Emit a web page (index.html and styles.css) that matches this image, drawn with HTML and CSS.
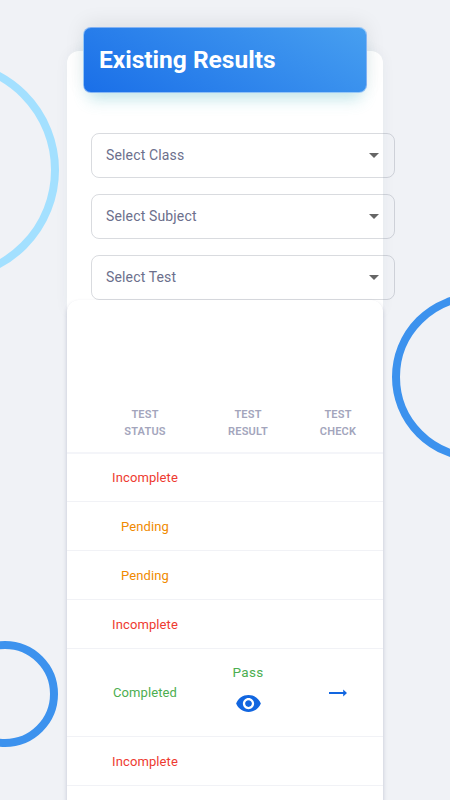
FILE: index.html
```html
<!DOCTYPE html>
<html lang="en">
<head>
<meta charset="utf-8">
<title>Existing Results</title>
<link rel="stylesheet" href="styles.css">
</head>
<body>
<div class="ring ring-left"></div>
<div class="ring ring-right"></div>
<div class="ring ring-bottom"></div>
<main class="page">
  <div class="card">
    <section class="filters">
      <h1 class="title">Existing Results</h1>
      <div class="selects">
        <div class="select"><span>Select Class</span><i class="caret"></i></div>
        <div class="select"><span>Select Subject</span><i class="caret"></i></div>
        <div class="select"><span>Select Test</span><i class="caret"></i></div>
      </div>
    </section>
    <section class="table">
      <div class="row head">
        <div class="c1">TEST<br>STATUS</div>
        <div class="c2">TEST<br>RESULT</div>
        <div class="c3">TEST<br>CHECK</div>
      </div>
      <div class="row"><div class="c1 red">Incomplete</div><div class="c2"></div><div class="c3"></div></div>
      <div class="row"><div class="c1 orange">Pending</div><div class="c2"></div><div class="c3"></div></div>
      <div class="row"><div class="c1 orange">Pending</div><div class="c2"></div><div class="c3"></div></div>
      <div class="row"><div class="c1 red">Incomplete</div><div class="c2"></div><div class="c3"></div></div>
      <div class="row tall">
        <div class="c1 green">Completed</div>
        <div class="c2 result">
          <span class="green pass">Pass</span>
          <svg class="eye" viewBox="0 0 24 24" width="27" height="27"><path d="M12 4.5C7 4.5 2.73 7.61 1 12c1.73 4.39 6 7.5 11 7.5s9.27-3.11 11-7.5c-1.73-4.39-6-7.5-11-7.5zM12 17c-2.76 0-5-2.24-5-5s2.24-5 5-5 5 2.24 5 5-2.24 5-5 5zm0-8c-1.66 0-3 1.34-3 3s1.34 3 3 3 3-1.34 3-3-1.34-3-3-3z"/></svg>
        </div>
        <div class="c3"><svg class="arrow" viewBox="0 0 18 8" width="18" height="8"><path d="M0 3.1h14.2V.4L18 4l-3.8 3.6V4.9H0z"/></svg></div>
      </div>
      <div class="row"><div class="c1 red">Incomplete</div><div class="c2"></div><div class="c3"></div></div>
    </section>
  </div>
</main>
</body>
</html>
```
FILE: styles.css
```css
* { box-sizing: border-box; }
html, body { margin: 0; height: 800px; overflow: hidden; }
body { background: #f0f2f6; font-family: Roboto, sans-serif; position: relative; }
.ring { position: absolute; border-radius: 50%; }
.ring-left { left: -163px; top: 59px; width: 222px; height: 222px; border: 8px solid #a3e0ff; }
.ring-right { left: 392px; top: 293px; width: 168px; height: 168px; border: 8px solid #3c92ee; }
.ring-bottom { left: -48px; top: 641px; width: 106px; height: 106px; border: 8px solid #3c92ee; }
.page { position: relative; padding: 51px 67px 0; }
.card { width: 316px; }
.filters { height: 260px; padding-left: 16px; position: relative; background: #fff; border-radius: 12px 12px 0 0; box-shadow: 0 0 14px rgba(40, 50, 80, 0.05); }
.title { margin: 0; position: relative; top: -24px; width: 284px; height: 66px; padding: 0 0 0 15px; border: 1px solid rgba(255, 255, 255, 0.45); border-radius: 8px; background: linear-gradient(30deg, #1a6fe8, #479ff0); color: #fff; font-size: 24.5px; font-weight: 700; line-height: 64px; box-shadow: 0 12px 16px -6px rgba(70, 190, 200, 0.3), 0 -4px 20px rgba(0, 0, 0, 0.08); }
.selects { display: flex; flex-direction: column; gap: 16px; margin: 16px 0 0 8px; width: 304px; }
.select { height: 45px; display: flex; align-items: center; justify-content: space-between; padding: 0 15px 1px 14px; border: 1px solid rgba(120, 125, 140, 0.28); border-radius: 8px; font-size: 14px; letter-spacing: 0.15px; color: #6c6f8c; }
.caret { width: 0; height: 0; border-left: 5px solid transparent; border-right: 5px solid transparent; border-top: 5px solid #666; }
.table { position: relative; margin-top: -11px; padding: 99px 0 40px; background: #fff; border-radius: 12px 12px 0 0; box-shadow: 0 3px 4px rgba(60, 70, 110, 0.25), 0 0 1px rgba(60, 70, 110, 0.06); }
.row { display: flex; align-items: center; height: 49px; border-bottom: 1px solid #f1f2f6; font-size: 13px; letter-spacing: 0.1px; text-align: center; }
.row > div { flex: none; }
.c1 { width: 156px; }
.c2 { width: 50px; }
.c3 { width: 90px; margin-left: 20px; }
.row.head { height: 55px; margin-bottom: -1px; padding-top: 7px; align-items: flex-start; border-bottom-width: 2px; border-bottom-color: #f4f5f9; font-size: 11px; font-weight: 600; line-height: 17px; letter-spacing: 0.2px; color: #a3a5bc; }
.row.tall { height: 88px; }
.result { display: flex; flex-direction: column; align-items: center; gap: 10px; padding-bottom: 5px; }
.pass { font-size: 13.5px; letter-spacing: 0.3px; }
.eye { fill: #1266e0; display: block; }
.arrow { fill: #1266e0; display: block; margin: 0 auto; }
.red { color: #ee3a30; }
.orange { color: #f08a00; }
.green { color: #4cae50; }
```
